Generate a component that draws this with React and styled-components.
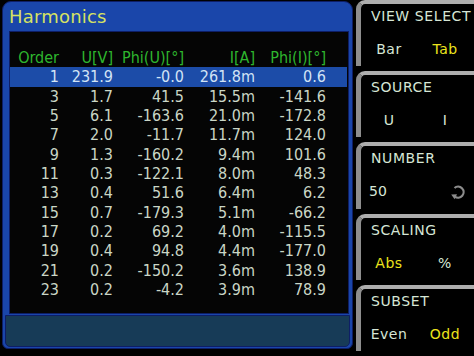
import React from "react";
import styled, { createGlobalStyle } from "styled-components";

const GlobalStyle = createGlobalStyle`
  html, body { margin: 0; padding: 0; background: #000; overflow: hidden; }
  #root { width: 474px; height: 356px; }
`;

const Screen = styled.div`
  width: 474px;
  height: 356px;
  background: #000;
  display: flex;
  box-sizing: border-box;
  padding: 1px 0 0 2px;
  gap: 3px;
`;

const Panel = styled.div`
  width: 351px;
  height: 348px;
  box-sizing: border-box;
  background: #1a46aa;
  border: 1px solid #0e1e66;
  border-radius: 9px 9px 6px 6px;
  display: flex;
  flex-direction: column;
`;

const Title = styled.div`
  height: 30px;
  flex: none;
  padding-left: 6px;
  font-family: "DejaVu Sans", sans-serif;
  font-size: 18px;
  line-height: 30px;
  color: #d6e262;
  letter-spacing: 0.2px;
`;

const TableArea = styled.div`
  flex: 1;
  margin: 0 4px 0 7px;
  background: #050505;
  box-shadow: 0 0 0 1px #0e1e66;
  padding-top: 16px;
  font-family: "DejaVu Sans Condensed", "DejaVu Sans", sans-serif;
  font-stretch: condensed;
  font-size: 16px;
`;

const Row = styled.div`
  display: grid;
  grid-template-columns: 49px 54px 71px 71px 71px;
  height: 19.35px;
  line-height: 19.35px;
  text-align: right;
  background: ${(p) => (p.$selected ? "#1c4ca8" : "transparent")};
  color: ${(p) => (p.$header ? "#2eb62e" : p.$selected ? "#d2e4f6" : "#cad6c6")};
  margin-right: 1px;
`;

const Footer = styled.div`
  height: 32px;
  flex: none;
  margin: 2px 2px 1px 2px;
  box-sizing: border-box;
  background: #173b57;
  border: 1px solid #0e1e66;
  border-radius: 0 0 5px 5px;
`;

const Keys = styled.div`
  flex: 1;
  display: flex;
  flex-direction: column;
  margin-top: -1px;
`;

const Key = styled.div`
  flex: 1;
  margin-bottom: 5px;
  border-top: 4px solid #aeaeae;
  border-left: 5px solid #8e8e8e;
  border-top-left-radius: 9px;
  display: flex;
  flex-direction: column;
  font-family: "DejaVu Sans", sans-serif;
  font-size: 14px;
  color: #d6e6d6;
`;

const KeyLabel = styled.div`
  padding: 4px 0 0 10px;
  line-height: 17px;
  letter-spacing: 0.6px;
  white-space: nowrap;
`;

const Options = styled.div`
  margin-top: 16px;
  display: grid;
  grid-template-columns: 56px 56px;
  line-height: 17px;
  text-align: center;
`;

const Opt = styled.span`
  color: ${(p) => (p.$active ? "#ece41c" : "#d6e6d6")};
  letter-spacing: 0.5px;
`;

const ValueRow = styled.div`
  margin-top: 16px;
  display: flex;
  justify-content: space-between;
  align-items: center;
  line-height: 17px;
  padding: 0 8px 0 8px;
`;

const RefreshIcon = () => (
  <svg width="16" height="16" viewBox="0 0 16 16">
    <path
      d="M4.5 4 A5.5 5.5 0 1 1 4.8 12.6"
      fill="none"
      stroke="#8c8c8c"
      strokeWidth="2.2"
    />
    <path d="M1.2 10.6 L7 10.2 L4.6 15.2 Z" fill="#8c8c8c" />
  </svg>
);

const rows = [
  ["1", "231.9", "-0.0", "261.8m", "0.6"],
  ["3", "1.7", "41.5", "15.5m", "-141.6"],
  ["5", "6.1", "-163.6", "21.0m", "-172.8"],
  ["7", "2.0", "-11.7", "11.7m", "124.0"],
  ["9", "1.3", "-160.2", "9.4m", "101.6"],
  ["11", "0.3", "-122.1", "8.0m", "48.3"],
  ["13", "0.4", "51.6", "6.4m", "6.2"],
  ["15", "0.7", "-179.3", "5.1m", "-66.2"],
  ["17", "0.2", "69.2", "4.0m", "-115.5"],
  ["19", "0.4", "94.8", "4.4m", "-177.0"],
  ["21", "0.2", "-150.2", "3.6m", "138.9"],
  ["23", "0.2", "-4.2", "3.9m", "78.9"],
];

const Choice = ({ label, a, b, active }) => (
  <Key>
    <KeyLabel>{label}</KeyLabel>
    <Options>
      <Opt $active={active === 0}>{a}</Opt>
      <Opt $active={active === 1}>{b}</Opt>
    </Options>
  </Key>
);

export default function App() {
  return (
    <>
      <GlobalStyle />
      <Screen>
        <Panel>
          <Title>Harmonics</Title>
          <TableArea>
            <Row $header>
              <span>Order</span>
              <span>U[V]</span>
              <span>Phi(U)[°]</span>
              <span>I[A]</span>
              <span>Phi(I)[°]</span>
            </Row>
            {rows.map((r, i) => (
              <Row key={r[0]} $selected={i === 0}>
                {r.map((c, j) => (
                  <span key={j}>{c}</span>
                ))}
              </Row>
            ))}
          </TableArea>
          <Footer />
        </Panel>
        <Keys>
          <Choice label="VIEW SELECT" a="Bar" b="Tab" active={1} />
          <Choice label="SOURCE" a="U" b="I" active={-1} />
          <Key>
            <KeyLabel>NUMBER</KeyLabel>
            <ValueRow>
              <span>50</span>
              <RefreshIcon />
            </ValueRow>
          </Key>
          <Choice label="SCALING" a="Abs" b="%" active={0} />
          <Choice label="SUBSET" a="Even" b="Odd" active={1} />
        </Keys>
      </Screen>
    </>
  );
}
